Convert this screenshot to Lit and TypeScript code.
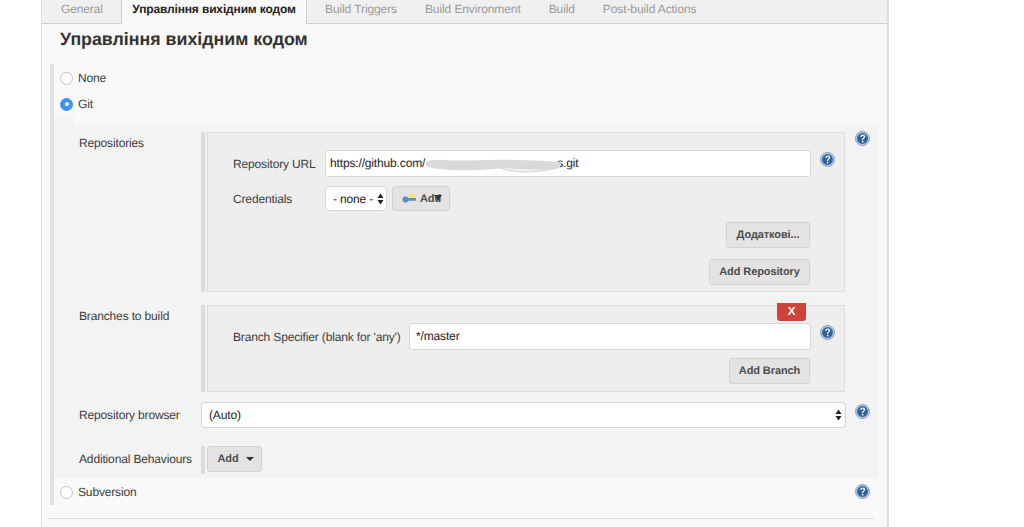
import { LitElement, html, css } from "lit";
import { customElement } from "lit/decorators.js";

const help = html`<svg class="help" viewBox="0 0 15 15" width="15" height="15" aria-hidden="true">
  <circle cx="7.5" cy="7.5" r="7" fill="#b4c8e0" stroke="#86a3c8" stroke-width="1"/>
  <circle cx="7.5" cy="7.5" r="5.4" fill="#2f6299"/>
  <path d="M5.2 5.8c.2-1.5 1.2-2.3 2.5-2.3 1.5 0 2.5.9 2.5 2.1 0 1-.6 1.5-1.3 2-.5.4-.7.7-.7 1.3H6.9c0-1 .3-1.5 1-2 .5-.4.8-.7.8-1.2s-.4-.9-1-.9-1 .4-1.1 1.1z" fill="#fff"/>
  <rect x="6.9" y="9.8" width="1.5" height="1.6" fill="#fff"/>
</svg>`;

const updown = html`<svg class="updown" viewBox="0 0 7 12" width="7" height="12" aria-hidden="true">
  <path d="M3.5 0.5 6.5 5H.5zM3.5 11.5.5 7h6z" fill="#222"/>
</svg>`;

@customElement("app-root")
export class AppRoot extends LitElement {
  static styles = css`
    :host { display: block; height: 527px; overflow: hidden; background: #fff; font-family: "Liberation Sans", Arial, sans-serif; font-size: 12px; letter-spacing: -0.15px; text-rendering: geometricPrecision; color: #3c3c3c; }
    .panel { margin-left: 41px; width: 845px; height: 527px; border-left: 1px solid #ddd; border-right: 2px solid #ddd; background: #f9f9f9; position: relative; }
    .tabs { display: flex; height: 24px; background: #f0f0f0; border-bottom: 1px solid #cfcfcf; box-sizing: border-box; color: #9a9a9a; }
    .tab { height: 24px; line-height: 18px; box-sizing: border-box; flex: none; white-space: nowrap; }
    .tab.active { color: #222; font-weight: 700; background: #f9f9f9; border-left: 1px solid #cfcfcf; border-right: 1px solid #cfcfcf; width: 186px; text-align: center; margin: 0 18px 0 0; }
    .tab.first { width: 79px; padding-left: 19px; }
    .tab.plain { margin-right: 28px; letter-spacing: -0.1px; }
    h1 { margin: 0; padding: 5px 0 0 18px; height: 40px; box-sizing: border-box; font-size: 17.8px; line-height: 21px; font-weight: 700; color: #333; letter-spacing: 0; white-space: nowrap; }
    .body { margin-left: 8px; border-left: 4px solid #e1e1e1; width: 824px; height: 441px; }
    .radio-row { display: flex; align-items: center; gap: 5px; height: 26px; padding: 2px 0 0 6px; box-sizing: border-box; }
    .radio { width: 13px; height: 13px; border-radius: 50%; border: 1px solid #c4c4c4; background: #fff; flex: none; box-sizing: border-box; }
    .radio.on { background: #3d94f6; border-color: #3d94f6; display: flex; align-items: center; justify-content: center; }
    .radio.on::after { content: ""; width: 4px; height: 4px; background: #fff; border-radius: 50%; }
    .notch { width: 20px; height: 9px; background: #f3f3f3; }
    .git { background: #f3f3f3; height: 353px; padding: 7px 0 0 25px; box-sizing: border-box; }
    .row { display: grid; grid-template-columns: 122px 645px 32px; align-items: start; }
    .lab { line-height: 16px; white-space: nowrap; }
    .help-cell { display: flex; justify-content: flex-end; padding-right: 8px; }
    .section { display: flex; }
    .bar { width: 4px; background: #dcdcdc; flex: none; margin-right: 2px; }
    .box { width: 638px; flex: none; box-sizing: border-box; background: #eee; border: 1px solid #ddd; position: relative; }
    .field { display: flex; align-items: center; }
    .fl { width: 117px; padding-left: 25px; box-sizing: border-box; flex: none; white-space: nowrap; }
    .fl.long { width: 201px; }
    .input { box-sizing: border-box; background: #fff; border: 1px solid #d5d5d5; border-radius: 3px; width: 486px; height: 27px; line-height: 25px; padding-left: 4px; color: #222; position: relative; white-space: nowrap; }
    .input.short { width: 402px; padding-left: 6px; }
    .field .help { margin: -9px 0 0 9px; }
    .gap { display: inline-block; width: 132px; }
    .cred { margin-top: 9px; height: 25px; }
    .sel { box-sizing: border-box; background: #fff; border: 1px solid #d5d5d5; border-radius: 4px; height: 25px; width: 62px; display: flex; align-items: center; padding-left: 7px; gap: 4px; color: #222; white-space: nowrap; }
    .btn { box-sizing: border-box; background: #e3e3e3; border: 1px solid #d2d2d2; border-radius: 3px; color: #4c4c4c; font-weight: 700; font-size: 11px; letter-spacing: -0.1px; white-space: nowrap; display: flex; align-items: center; justify-content: center; }
    .addkey { width: 58px; height: 25px; margin-left: 5px; justify-content: flex-start; padding-left: 9px; gap: 3px; position: relative; }
    .addkey .cross { position: absolute; left: 41px; top: 8px; display: block; }
    .right { display: flex; justify-content: flex-end; padding-right: 34px; }
    .m11 { margin-top: 11px; }
    .m8 { margin-top: 8px; }
    .w84 { width: 84px; height: 26px; }
    .w101 { width: 101px; height: 26px; }
    .w81 { width: 81px; height: 26px; }
    .repo-box { height: 160px; padding-top: 17px; }
    .branch-box { height: 87px; padding-top: 17px; }
    .x { position: absolute; right: 38px; top: -3px; width: 29px; height: 18px; background: #d14238; border-radius: 0 0 3px 3px; color: #fff; font-weight: 700; font-size: 11.5px; line-height: 18px; text-align: center; }
    .smudge { position: absolute; left: 100px; top: 6px; display: block; }
    .branches { margin-top: 13px; }
    .browser { margin-top: 10px; }
    .pt3 { padding-top: 3px; }
    .pt5 { padding-top: 5px; }
    .browser .help-cell { padding-top: 2px; }
    .top-help { margin-top: -1px; }
    .wide { box-sizing: border-box; width: 645px; height: 26px; background: #fff; border: 1px solid #d5d5d5; border-radius: 4px; display: flex; align-items: center; justify-content: space-between; padding: 0 3px 0 7px; color: #222; }
    .add-row { margin-top: 18px; }
    .bar28 { height: 28px; }
    .dd { width: 55px; height: 26px; gap: 7px; padding-left: 2px; }
    .caret { width: 0; height: 0; border-left: 4px solid transparent; border-right: 4px solid transparent; border-top: 4px solid #333; display: block; }
    .svn { position: relative; }
    .svn .help { position: absolute; left: 801px; top: 6px; }
    .hr { position: absolute; left: 5px; right: 13px; top: 518px; height: 1px; background: #dcdcdc; }
  `;

  render() {
    return html`<div class="panel">
      <div class="tabs">
        <div class="tab first">General</div>
        <div class="tab active">Управління вихідним кодом</div>
        <div class="tab plain">Build Triggers</div>
        <div class="tab plain">Build Environment</div>
        <div class="tab plain">Build</div>
        <div class="tab plain">Post-build Actions</div>
      </div>
      <h1>Управління вихідним кодом</h1>
      <div class="body">
        <div class="radio-row"><span class="radio"></span>None</div>
        <div class="radio-row"><span class="radio on"></span>Git</div>
        <div class="notch"></div>
        <div class="git">
          <div class="row">
            <div class="lab pt3">Repositories</div>
            <div class="section">
              <div class="bar"></div>
              <div class="box repo-box">
                <div class="field">
                  <div class="fl">Repository URL</div>
                  <div class="input">https://github.com/<span class="gap"></span>s.git<svg class="smudge" width="140" height="20" viewBox="0 0 140 20" aria-hidden="true"><path d="M0 5 Q6 2 18 3 T60 3 T134 5 Q137 9 131 12 Q100 14 78 11 Q40 15 14 12 Q2 11 0 8z" fill="#d9d9d9"/><path d="M72 10 Q95 19 130 11" fill="none" stroke="#d9d9d9" stroke-width="1.4"/></svg></div>
                  ${help}
                </div>
                <div class="field cred">
                  <div class="fl">Credentials</div>
                  <div class="sel">- none - ${updown}</div>
                  <div class="btn addkey">
                    <svg width="15" height="12" viewBox="0 0 15 12" aria-hidden="true"><circle cx="10.5" cy="3" r="2.6" fill="#f6e36a"/><circle cx="3.5" cy="6.5" r="3" fill="#5b8bc4"/><rect x="4" y="5" width="10" height="2.8" rx="1" fill="#5b8bc4"/></svg>
                    Add
                    <svg class="cross" width="8" height="7" viewBox="0 0 8 7" aria-hidden="true"><path d="M0 0h8L4 6z" fill="#333"/></svg>
                  </div>
                </div>
                <div class="right m11"><div class="btn w84">Додаткові...</div></div>
                <div class="right m11"><div class="btn w101">Add Repository</div></div>
              </div>
            </div>
            <div class="help-cell top-help">${help}</div>
          </div>
          <div class="row branches">
            <div class="lab pt3">Branches to build</div>
            <div class="section">
              <div class="bar"></div>
              <div class="box branch-box">
                <div class="x">X</div>
                <div class="field">
                  <div class="fl long">Branch Specifier (blank for 'any')</div>
                  <div class="input short">*/master</div>
                  ${help}
                </div>
                <div class="right m8"><div class="btn w81">Add Branch</div></div>
              </div>
            </div>
            <div></div>
          </div>
          <div class="row browser">
            <div class="lab pt5">Repository browser</div>
            <div class="wide">(Auto)${updown}</div>
            <div class="help-cell">${help}</div>
          </div>
          <div class="row add-row">
            <div class="lab pt5">Additional Behaviours</div>
            <div class="section">
              <div class="bar bar28"></div>
              <div class="btn dd">Add<span class="caret"></span></div>
            </div>
            <div></div>
          </div>
        </div>
        <div class="radio-row svn"><span class="radio"></span>Subversion ${help}</div>
      </div>
      <div class="hr"></div>
    </div>`;
  }
}
